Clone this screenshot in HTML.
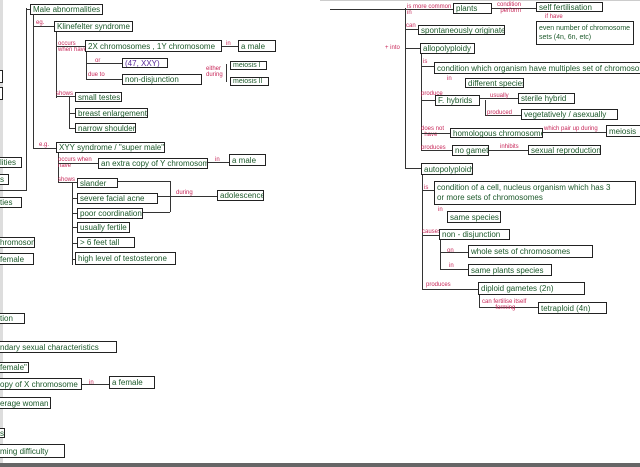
<!DOCTYPE html>
<html><head><meta charset="utf-8"><style>
body{margin:0;width:640px;height:467px;background:#fff;position:relative;overflow:hidden;font-family:"Liberation Sans",sans-serif}
.b{position:absolute;border:1px solid #222;color:#1d5a2b;font-size:8px;line-height:9px;padding:0 2px;box-sizing:border-box;white-space:nowrap;overflow:hidden;background:#fff;display:flex;align-items:center}
.r{position:absolute;color:#c8285a;font-size:6px;line-height:6px;white-space:nowrap}
.h{position:absolute;height:1px;background:#333}
.v{position:absolute;width:1px;background:#333}
</style></head><body>
<div style="position:absolute;left:0;top:0;width:3px;height:467px;background:#ddd"></div>
<div style="position:absolute;left:0;top:463px;width:640px;height:4px;background:#666"></div>
<div class="h" style="left:320px;top:0;width:320px;background:#ccc"></div>

<!-- left tree -->
<div class="v" style="left:26px;top:8px;height:183px"></div>
<div class="h" style="left:0;top:190px;width:27px"></div>
<div class="h" style="left:26px;top:9px;width:4px"></div>
<div class="b" style="left:30px;top:4px;width:73px;height:11px">Male abnormalities</div>
<div class="v" style="left:33px;top:14px;height:134px"></div>
<div class="h" style="left:33px;top:26px;width:21px"></div>
<div class="r" style="left:36px;top:20px">eg.</div>
<div class="b" style="left:54px;top:21px;width:79px;height:11px">Klinefelter syndrome</div>
<div class="v" style="left:56px;top:32px;height:66px"></div>
<div class="r" style="left:58px;top:41px">occurs<br>when have</div>
<div class="h" style="left:56px;top:46px;width:29px"></div>
<div class="b" style="left:85px;top:40px;width:137px;height:12px">2X chromosomes , 1Y chromosome</div>
<div class="r" style="left:226px;top:41px">in</div>
<div class="h" style="left:222px;top:46px;width:16px"></div>
<div class="b" style="left:238px;top:40px;width:38px;height:12px">a male</div>
<div class="v" style="left:86px;top:52px;height:28px"></div>
<div class="r" style="left:95px;top:58px">or</div>
<div class="h" style="left:86px;top:63px;width:36px"></div>
<div class="b" style="left:122px;top:58px;width:46px;height:10px;color:#5a2a9a">(47, XXY)</div>
<div class="r" style="left:88px;top:72px">due to</div>
<div class="h" style="left:86px;top:79px;width:36px"></div>
<div class="b" style="left:122px;top:74px;width:80px;height:11px">non-disjunction</div>
<div class="r" style="left:206px;top:66px">either<br>during</div>
<div class="v" style="left:226px;top:64px;height:18px"></div>
<div class="b" style="left:230px;top:61px;width:37px;height:9px;font-size:7px;line-height:7px">meiosis I</div>
<div class="b" style="left:230px;top:77px;width:39px;height:9px;font-size:7px;line-height:7px">meiosis II</div>
<div class="r" style="left:56px;top:91px">shows</div>
<div class="v" style="left:69px;top:96px;height:33px"></div>
<div class="h" style="left:56px;top:96px;width:19px"></div>
<div class="b" style="left:75px;top:92px;width:47px;height:10px">small testes</div>
<div class="h" style="left:69px;top:113px;width:6px"></div>
<div class="b" style="left:75px;top:108px;width:73px;height:10px">breast enlargement</div>
<div class="h" style="left:69px;top:128px;width:6px"></div>
<div class="b" style="left:75px;top:123px;width:61px;height:10px">narrow shoulders</div>
<div class="h" style="left:33px;top:148px;width:23px"></div>
<div class="r" style="left:39px;top:142px">e.g.</div>
<div class="b" style="left:56px;top:142px;width:109px;height:11px">XYY syndrome / "super male"</div>
<div class="v" style="left:58px;top:153px;height:30px"></div>
<div class="r" style="left:58px;top:157px">occurs when<br>have</div>
<div class="h" style="left:58px;top:163px;width:40px"></div>
<div class="b" style="left:98px;top:158px;width:110px;height:11px">an extra copy of Y chromosome</div>
<div class="r" style="left:215px;top:157px">in</div>
<div class="h" style="left:208px;top:162px;width:21px"></div>
<div class="b" style="left:229px;top:154px;width:37px;height:12px">a male</div>
<div class="r" style="left:58px;top:177px">shows</div>
<div class="h" style="left:58px;top:182px;width:19px"></div>
<div class="v" style="left:72px;top:182px;height:83px"></div>
<div class="b" style="left:77px;top:178px;width:41px;height:10px">slander</div>
<div class="h" style="left:72px;top:198px;width:5px"></div>
<div class="b" style="left:77px;top:193px;width:81px;height:11px">severe facial acne</div>
<div class="h" style="left:72px;top:213px;width:5px"></div>
<div class="b" style="left:77px;top:208px;width:66px;height:11px">poor coordination</div>
<div class="h" style="left:72px;top:227px;width:5px"></div>
<div class="b" style="left:77px;top:222px;width:53px;height:11px">usually fertile</div>
<div class="h" style="left:72px;top:243px;width:5px"></div>
<div class="b" style="left:77px;top:237px;width:58px;height:11px">&gt; 6 feet tall</div>
<div class="h" style="left:72px;top:259px;width:5px"></div>
<div class="b" style="left:75px;top:252px;width:101px;height:13px">high level of testosterone</div>
<div class="v" style="left:170px;top:181px;height:31px"></div>
<div class="h" style="left:118px;top:181px;width:52px"></div>
<div class="h" style="left:143px;top:212px;width:27px"></div>
<div class="h" style="left:158px;top:196px;width:59px"></div>
<div class="r" style="left:176px;top:190px">during</div>
<div class="b" style="left:217px;top:190px;width:47px;height:11px">adolescence</div>

<!-- left cut boxes -->
<div class="b" style="left:-3px;top:70px;width:6px;height:13px"></div>
<div class="b" style="left:-3px;top:87px;width:6px;height:13px"></div>
<div class="b" style="left:-3px;top:157px;width:25px;height:11px">lities</div>
<div class="b" style="left:-3px;top:174px;width:12px;height:11px">s</div>
<div class="b" style="left:-3px;top:197px;width:25px;height:11px">ties</div>
<div class="b" style="left:-3px;top:237px;width:38px;height:11px">hromosome</div>
<div class="b" style="left:-3px;top:253px;width:37px;height:12px">female</div>
<div class="b" style="left:-3px;top:313px;width:28px;height:11px">tion</div>
<div class="b" style="left:-3px;top:341px;width:120px;height:12px">ndary sexual characteristics</div>
<div class="b" style="left:-3px;top:362px;width:32px;height:11px">female"</div>
<div class="b" style="left:-3px;top:378px;width:85px;height:12px">opy of X chromosome</div>
<div class="r" style="left:89px;top:380px">in</div>
<div class="h" style="left:82px;top:384px;width:27px"></div>
<div class="b" style="left:109px;top:376px;width:46px;height:13px">a female</div>
<div class="b" style="left:-3px;top:397px;width:54px;height:12px">erage woman</div>
<div class="b" style="left:-3px;top:428px;width:8px;height:10px">s</div>
<div class="b" style="left:-3px;top:444px;width:68px;height:14px">ming difficulty</div>

<!-- right tree -->
<div class="h" style="left:330px;top:9px;width:123px"></div>
<div class="r" style="left:407px;top:4px">is more common<br>in</div>
<div class="b" style="left:453px;top:3px;width:39px;height:11px">plants</div>
<div class="h" style="left:492px;top:8px;width:44px"></div>
<div class="r" style="left:497px;top:2px">condition<br>&nbsp;&nbsp;perform</div>
<div class="b" style="left:536px;top:2px;width:67px;height:10px">self fertilisation</div>
<div class="r" style="left:545px;top:14px">if have</div>
<div class="b" style="left:536px;top:21px;width:98px;height:24px;font-size:7px;line-height:9px">even number of chromosome<br>sets (4n, 6n, etc)</div>
<div class="v" style="left:405px;top:8px;height:160px"></div>
<div class="h" style="left:405px;top:29px;width:13px"></div>
<div class="r" style="left:406px;top:23px">can</div>
<div class="b" style="left:418px;top:25px;width:87px;height:10px">spontaneously originate</div>
<div class="r" style="left:385px;top:45px">+ into</div>
<div class="h" style="left:405px;top:48px;width:15px"></div>
<div class="b" style="left:420px;top:43px;width:55px;height:11px">allopolyploidy</div>
<div class="v" style="left:421px;top:54px;height:96px"></div>
<div class="r" style="left:423px;top:59px">is</div>
<div class="h" style="left:421px;top:66px;width:13px"></div>
<div class="b" style="left:434px;top:62px;width:210px;height:12px">condition which organism have multiples set of chromosome</div>
<div class="r" style="left:447px;top:76px">in</div>
<div class="b" style="left:465px;top:78px;width:59px;height:10px">different species</div>
<div class="r" style="left:421px;top:91px">produce</div>
<div class="h" style="left:421px;top:100px;width:14px"></div>
<div class="b" style="left:435px;top:95px;width:45px;height:11px">F. hybrids</div>
<div class="h" style="left:480px;top:98px;width:38px"></div>
<div class="r" style="left:490px;top:93px">usually</div>
<div class="b" style="left:518px;top:93px;width:57px;height:11px">sterile hybrid</div>
<div class="v" style="left:485px;top:100px;height:15px"></div>
<div class="h" style="left:485px;top:115px;width:36px"></div>
<div class="r" style="left:487px;top:110px">produced</div>
<div class="b" style="left:521px;top:109px;width:97px;height:11px">vegetatively / asexually</div>
<div class="r" style="left:421px;top:126px">does not<br>&nbsp;&nbsp;have</div>
<div class="h" style="left:421px;top:133px;width:29px"></div>
<div class="b" style="left:450px;top:128px;width:93px;height:10px">homologous chromosomes</div>
<div class="r" style="left:544px;top:126px">which pair up during</div>
<div class="h" style="left:543px;top:132px;width:63px"></div>
<div class="b" style="left:606px;top:125px;width:40px;height:12px">meiosis</div>
<div class="r" style="left:421px;top:145px">produces</div>
<div class="h" style="left:421px;top:150px;width:31px"></div>
<div class="b" style="left:452px;top:145px;width:37px;height:11px">no gamete</div>
<div class="r" style="left:500px;top:144px">inhibits</div>
<div class="h" style="left:489px;top:150px;width:39px"></div>
<div class="b" style="left:528px;top:145px;width:73px;height:10px">sexual reproduction</div>
<div class="h" style="left:405px;top:168px;width:16px"></div>
<div class="b" style="left:421px;top:163px;width:52px;height:12px">autopolyploidy</div>
<div class="v" style="left:422px;top:175px;height:115px"></div>
<div class="r" style="left:424px;top:185px">is</div>
<div class="h" style="left:422px;top:190px;width:12px"></div>
<div class="b" style="left:434px;top:181px;width:202px;height:24px;line-height:10px">condition of a cell, nucleus organism which has 3<br>or more sets of chromosomes</div>
<div class="r" style="left:438px;top:207px">in</div>
<div class="b" style="left:447px;top:211px;width:54px;height:12px">same species</div>
<div class="r" style="left:422px;top:229px">causes</div>
<div class="h" style="left:422px;top:235px;width:17px"></div>
<div class="b" style="left:439px;top:229px;width:71px;height:11px">non - disjunction</div>
<div class="v" style="left:440px;top:240px;height:30px"></div>
<div class="r" style="left:447px;top:248px">on</div>
<div class="h" style="left:440px;top:252px;width:28px"></div>
<div class="b" style="left:468px;top:245px;width:125px;height:13px">whole sets of chromosomes</div>
<div class="r" style="left:449px;top:263px">in</div>
<div class="h" style="left:440px;top:269px;width:28px"></div>
<div class="b" style="left:468px;top:264px;width:84px;height:12px">same plants species</div>
<div class="r" style="left:426px;top:282px">produces</div>
<div class="h" style="left:422px;top:289px;width:56px"></div>
<div class="b" style="left:478px;top:282px;width:107px;height:13px">diploid gametes (2n)</div>
<div class="v" style="left:479px;top:295px;height:12px"></div>
<div class="h" style="left:479px;top:307px;width:59px"></div>
<div class="r" style="left:482px;top:299px">can fertilise itself<br>&nbsp;&nbsp;&nbsp;&nbsp;&nbsp;&nbsp;&nbsp;&nbsp;forming</div>
<div class="b" style="left:538px;top:302px;width:69px;height:12px">tetraploid (4n)</div>
</body></html>
